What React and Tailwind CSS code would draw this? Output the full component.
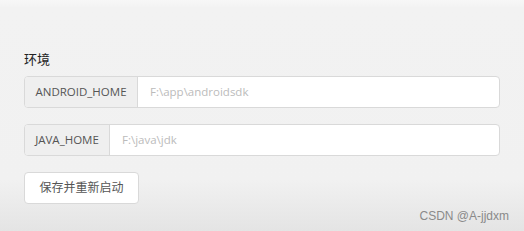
export default function App() {
  return (
    <div
      className="h-[231px] w-[524px] overflow-hidden bg-[linear-gradient(to_bottom,#f7f7f7_0px,#f2f2f2_8px,#f1f1f1_180px,#e4e4e4_231px)] text-[12px]"
      style={{ fontFamily: '"Open Sans", "Noto Sans CJK SC", sans-serif' }}
    >
      <div className="flex flex-col px-6 pt-[49px]">
        <p className="text-[13px] leading-[20px] text-[#222]">环境</p>

        <div className="mt-[7px] flex h-[32px] w-[476px] overflow-hidden rounded-[4px] border border-[#d9d9d9] bg-white">
          <span className="flex w-[113px] items-center justify-center border-r border-[#d9d9d9] bg-[#efefef] text-[11.5px] text-[#555]">
            ANDROID_HOME
          </span>
          <span className="flex items-center pl-3 text-[11.5px] text-[#bbb]">F:\app\androidsdk</span>
        </div>

        <div className="mt-4 flex h-[32px] w-[476px] overflow-hidden rounded-[4px] border border-[#d9d9d9] bg-white">
          <span className="flex w-[85px] items-center justify-center border-r border-[#d9d9d9] bg-[#efefef] text-[11.5px] text-[#555]">
            JAVA_HOME
          </span>
          <span className="flex items-center pl-3 text-[11.5px] text-[#bbb]">F:\java\jdk</span>
        </div>

        <div className="mt-4 flex">
          <button className="h-[32px] w-[115px] rounded-[4px] border border-[#d9d9d9] bg-white text-[12px] text-[#555]">
            保存并重新启动
          </button>
        </div>
      </div>
      <p className="mt-[3px] pr-[15px] text-right text-[12px] text-[#8a8a8a]" style={{ fontFamily: '"Liberation Sans", sans-serif' }}>
        CSDN @A-jjdxm
      </p>
    </div>
  );
}
